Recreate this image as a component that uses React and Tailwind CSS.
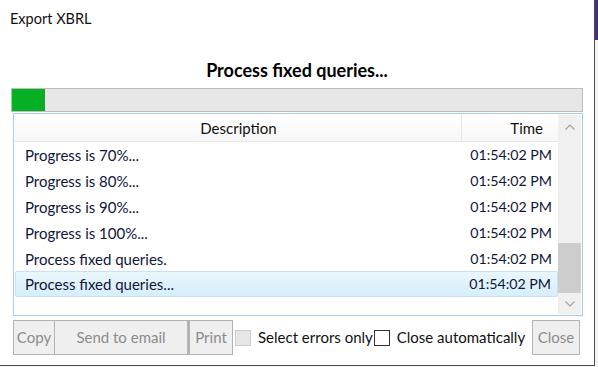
import React from "react";

const rows = [
  "Progress is 70%...",
  "Progress is 80%...",
  "Progress is 90%...",
  "Progress is 100%...",
  "Process fixed queries.",
  "Process fixed queries...",
];

function Btn({ children, className }) {
  return (
    <div
      className={`h-[35px] flex items-center justify-center border border-[#b4b4b4] bg-[#efefef] text-[#8c8c8c] ${className}`}
    >
      {children}
    </div>
  );
}

export default function App() {
  return (
    <div
      className="w-[598px] h-[367px] overflow-hidden flex bg-[#f3f3f3] text-[15px]"
      style={{ fontFamily: "Lato, 'Noto Sans', sans-serif" }}
    >
      <div className="w-[595px] h-[366px] bg-white border-r border-b border-[#4d4d4d] flex flex-col">
        <div className="h-[38px] pl-[10px] flex items-center text-[#111] text-[14.5px]">Export XBRL</div>
        <div className="h-[50px] pt-[14px] flex items-center justify-center font-bold text-[18px] text-black">
          Process fixed queries...
        </div>
        <div className="mx-[11px] h-[24px] border border-[#bcbcbc] bg-[#e6e6e6] flex">
          <div className="w-[33px] bg-[#06b025]" />
        </div>
        <div className="ml-[13px] mr-[11px] mt-[1px] h-[203px] border border-[#a7cde8] flex p-[1px]">
          <div className="flex-1 flex flex-col">
            <div className="h-[27px] flex border-b border-[#e5e5e5] bg-gradient-to-b from-white to-[#f7f7f7] text-[#111]">
              <div className="w-[446px] flex items-center justify-center border-r border-[#e5e5e5] ml-[1px]">Description</div>
              <div className="flex-1 flex items-center justify-end pr-[15px]">Time</div>
            </div>
            {rows.map((r, i) => {
              const sel = i === rows.length - 1;
              return (
                <div
                  key={i}
                  className={`h-[26px] flex items-center text-[#10163a] ${
                    sel ? "border border-[#c4e3f8] bg-gradient-to-b from-[#eaf6fd] to-[#d6eefb] rounded-[2px] mt-[-1px]" : ""
                  }`}
                >
                  <div className={`w-[447px] ${sel ? "pl-[9px]" : "pl-[10px]"}`}>{r}</div>
                  <div className="flex-1 flex justify-end pr-[6px] text-[14.2px]">01:54:02 PM</div>
                </div>
              );
            })}
          </div>
          <div className="w-[23px] bg-[#f0f0f0] flex flex-col">
            <div className="h-[24px] flex items-center justify-center">
              <svg width="10" height="6" viewBox="0 0 10 6">
                <path d="M0.5 5.5 L5 1 L9.5 5.5" fill="none" stroke="#a3a3a3" strokeWidth="1.2" />
              </svg>
            </div>
            <div className="h-[104px]" />
            <div className="h-[50px] bg-[#cdcdcd]" />
            <div className="flex-1 flex items-center justify-center">
              <svg width="10" height="6" viewBox="0 0 10 6">
                <path d="M0.5 0.5 L5 5 L9.5 0.5" fill="none" stroke="#a3a3a3" strokeWidth="1.2" />
              </svg>
            </div>
          </div>
        </div>
        <div className="ml-[13px] mr-[14px] mt-[4px] flex items-center">
          <Btn className="w-[42px]">Copy</Btn>
          <Btn className="w-[133px] border-l-0">Send to email</Btn>
          <Btn className="w-[45px] border-l-[2px]">Print</Btn>
          <div className="ml-[2px] w-[16px] h-[16px] border border-[#cdcdcd] bg-[#e6e6e6]" />
          <span className="ml-[7px] text-[#111]">Select errors only</span>
          <div className="ml-[1px] w-[16px] h-[16px] border border-[#333] bg-white" />
          <span className="ml-[7px] text-[#111]">Close automatically</span>
          <Btn className="ml-auto w-[48px]">Close</Btn>
        </div>
      </div>
      <div className="flex-1 flex flex-col">
        <div className="h-[40px] bg-[#4a2e7e]" />
        <div className="flex-1 bg-[#f3f3f3]" />
      </div>
    </div>
  );
}
